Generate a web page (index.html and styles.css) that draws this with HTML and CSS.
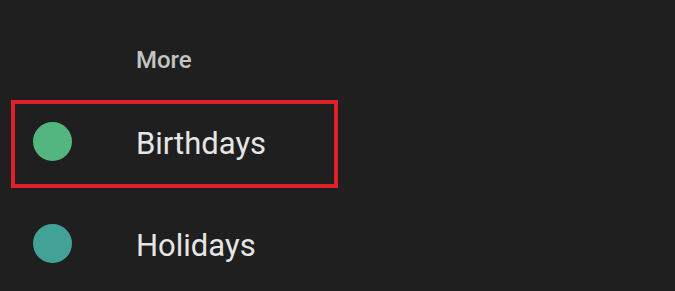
FILE: index.html
```html
<!DOCTYPE html>
<html lang="en">
<head>
    <meta charset="UTF-8">
    <meta name="viewport" content="width=device-width, initial-scale=1.0">
    <title>Calendars - More</title>
    <link rel="stylesheet" href="styles.css">
</head>
<body>
    <div class="drawer">
        <div class="section-title">More</div>

        <div class="calendar-row">
            <span class="dot dot-birthdays"></span>
            <span class="label">Birthdays</span>
            <div class="highlight"></div>
        </div>

        <div class="calendar-row">
            <span class="dot dot-holidays"></span>
            <span class="label">Holidays</span>
        </div>
    </div>
</body>
</html>
```

FILE: styles.css
```css
:root {
    --bg: #1f1f1f;
    --title-color: #c4c4c4;
    --label-color: #e6e6e6;
    --birthdays: #53b67e;
    --holidays: #42a297;
    --marker: #e0202a;
}

body {
    margin: 0;
    background: var(--bg);
    font-family: Roboto, 'Noto Sans', sans-serif;
    overflow: hidden;
}

.drawer {
    padding-top: 48px;
}

.section-title {
    padding-left: 136px;
    font-size: 24px;
    line-height: 24px;
    font-weight: 500;
    color: var(--title-color);
    margin-bottom: 20px;
}

.calendar-row {
    position: relative;
    display: flex;
    align-items: center;
    height: 102px;
}

.dot {
    width: 39px;
    height: 39px;
    border-radius: 50%;
    margin-left: 33px;
    margin-right: 64px;
    margin-top: -3px;
}

.dot-birthdays {
    background: var(--birthdays);
}

.dot-holidays {
    background: var(--holidays);
}

.label {
    font-size: 31px;
    color: var(--label-color);
}

/* annotation box drawn over the first row */
.highlight {
    position: absolute;
    left: 11px;
    top: 8px;
    width: 327px;
    height: 88px;
    box-sizing: border-box;
    border: 4px solid var(--marker);
}
```
